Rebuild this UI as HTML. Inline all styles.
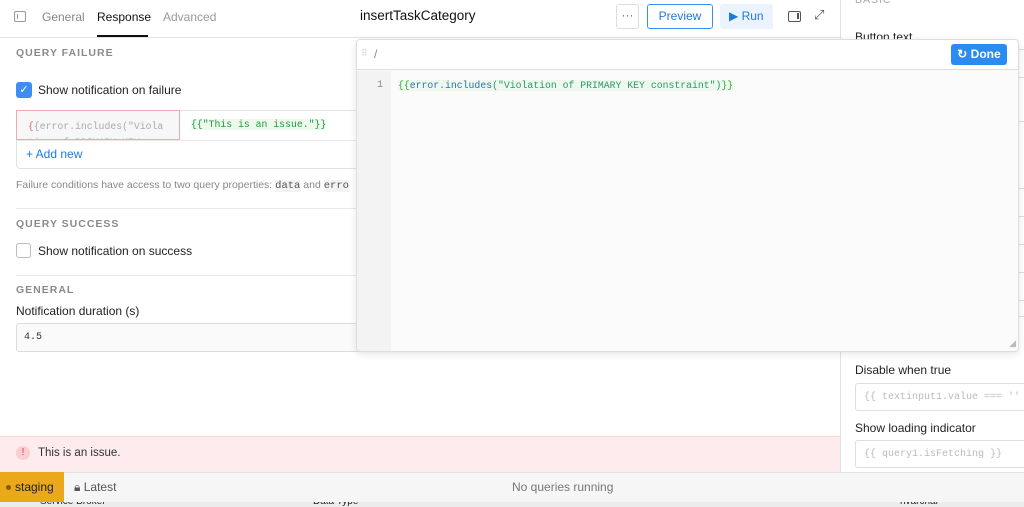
<!DOCTYPE html>
<html><head><style>
*{box-sizing:border-box;margin:0;padding:0}
body{width:1024px;height:507px;overflow:hidden;font-family:"Liberation Sans",sans-serif;background:#fff;position:relative;color:#1f1f1f}
.a{position:absolute}
.mono{font-family:"Liberation Mono",monospace}
.sec{font-size:10.5px;letter-spacing:1px;color:#8a8a8a;font-weight:bold}
.lbl{font-size:12px;color:#222}
</style></head><body>
<!-- top bar -->
<div class="a" style="left:0;top:0;width:841px;height:38px;border-bottom:1px solid #e2e2e2"></div>
<div class="a" style="left:14px;top:11px;width:12px;height:11px;border:1px solid #999;border-radius:2px"><div style="position:absolute;left:2px;top:2px;width:1px;height:5px;background:#999"></div></div>
<div class="a" style="left:42px;top:10px;font-size:12px;color:#888">General</div>
<div class="a" style="left:97px;top:10px;font-size:12px;color:#111">Response</div>
<div class="a" style="left:97px;top:35px;width:51px;height:2px;background:#111"></div>
<div class="a" style="left:163px;top:10px;font-size:12px;color:#999">Advanced</div>
<div class="a" style="left:360px;top:8px;font-size:13.5px;color:#111">insertTaskCategory</div>
<div class="a" style="left:616px;top:4px;width:23px;height:25px;border:1px solid #ddd;border-radius:3px;text-align:center;font-size:12px;line-height:20px;color:#666">···</div>
<div class="a" style="left:647px;top:4px;width:66px;height:25px;border:1px solid #3d8ef0;border-radius:3px;text-align:center;font-size:12px;line-height:23px;color:#1f7ae0">Preview</div>
<div class="a" style="left:720px;top:4px;width:53px;height:25px;background:#eaf3fe;border-radius:3px;font-size:12px;line-height:25px;color:#1f7ae0;padding-left:9px">▶ Run</div>
<div class="a" style="left:788px;top:11px;width:13px;height:11px;border:1.5px solid #555;border-radius:2px"><div style="position:absolute;right:1px;top:1px;width:2px;height:6px;background:#555"></div></div>
<div class="a" style="left:814px;top:7px;font-size:13px;color:#555">⤢</div>
<!-- right panel -->
<div class="a" style="left:840px;top:0;width:1px;height:472px;background:#e2e2e2"></div>
<div class="a sec" style="left:855px;top:-6px;font-weight:normal;color:#aaa">BASIC</div>
<div class="a lbl" style="left:855px;top:30px">Button text</div>
<div class="a" style="left:1018px;top:49px;width:6px;height:1px;background:#ddd"></div>
<div class="a" style="left:1018px;top:77px;width:6px;height:1px;background:#ddd"></div>
<div class="a" style="left:1018px;top:121px;width:6px;height:1px;background:#ddd"></div>
<div class="a" style="left:1018px;top:188px;width:6px;height:1px;background:#ddd"></div>
<div class="a" style="left:1018px;top:216px;width:6px;height:1px;background:#ddd"></div>
<div class="a" style="left:1018px;top:244px;width:6px;height:1px;background:#ddd"></div>
<div class="a" style="left:1018px;top:272px;width:6px;height:1px;background:#ddd"></div>
<div class="a" style="left:1018px;top:300px;width:6px;height:1px;background:#ddd"></div>
<div class="a" style="left:1018px;top:316px;width:6px;height:1px;background:#ddd"></div>
<div class="a lbl" style="left:855px;top:363px">Disable when true</div>
<div class="a mono" style="left:855px;top:383px;width:180px;height:28px;border:1px solid #ddd;border-radius:3px;font-size:10px;color:#bbb;padding:8px 8px">{{ textinput1.value === ''</div>
<div class="a lbl" style="left:855px;top:421px">Show loading indicator</div>
<div class="a mono" style="left:855px;top:440px;width:180px;height:28px;border:1px solid #ddd;border-radius:3px;font-size:10px;color:#bbb;padding:8px 8px">{{ query1.isFetching }}</div>
<!-- left content -->
<div class="a sec" style="left:16px;top:47px">QUERY FAILURE</div>
<div class="a" style="left:16px;top:82px;width:16px;height:16px;background:#3d8ef0;border-radius:3px;color:#fff;font-size:11px;text-align:center;line-height:16px">✓</div>
<div class="a lbl" style="left:38px;top:83px">Show notification on failure</div>
<div class="a" style="left:16px;top:110px;width:360px;height:59px;border:1px solid #e2e2e2;border-radius:4px"></div>
<div class="a" style="left:16px;top:110px;width:164px;height:30px;border:1px solid #f4a9ab;background:#f7f7f7;overflow:hidden"><div class="mono" style="font-size:9.8px;color:#aaa;padding:8px 11px;line-height:16px;word-break:break-all"><span style="color:#e26b6b">{</span>{error.includes("Violation of PRIMARY KEY</div></div>
<div class="a" style="left:16px;top:140px;width:340px;height:1px;background:#e8e8e8"></div>
<div class="a mono" style="left:191px;top:119px;font-size:9.8px;color:#1f9a3a;background:#eef9ee">{{"This is an issue."}}</div>
<div class="a" style="left:26px;top:147px;font-size:12px;color:#1f7ae0">+ Add new</div>
<div class="a" style="left:16px;top:179px;font-size:10.5px;color:#888">Failure conditions have access to two query properties: <span class="mono" style="background:#f3f3f3;color:#555">data</span> and <span class="mono" style="background:#f3f3f3;color:#555">erro</span></div>
<div class="a" style="left:16px;top:208px;width:340px;height:1px;background:#e8e8e8"></div>
<div class="a sec" style="left:16px;top:218px">QUERY SUCCESS</div>
<div class="a" style="left:16px;top:243px;width:15px;height:15px;border:1px solid #bbb;border-radius:3px"></div>
<div class="a lbl" style="left:38px;top:244px">Show notification on success</div>
<div class="a" style="left:16px;top:275px;width:340px;height:1px;background:#e8e8e8"></div>
<div class="a sec" style="left:16px;top:284px">GENERAL</div>
<div class="a lbl" style="left:16px;top:304px">Notification duration (s)</div>
<div class="a mono" style="left:16px;top:323px;width:360px;height:29px;border:1px solid #ddd;border-radius:3px;background:#fafafa;font-size:10px;padding:8px 7px;color:#333">4.5</div>
<!-- popup -->
<div class="a" style="left:356px;top:39px;width:663px;height:313px;border:1px solid #ddd;border-radius:4px;background:#fbfbfb;box-shadow:0 2px 8px rgba(0,0,0,.1);overflow:hidden">
 <div style="height:30px;background:#fff;border-bottom:1px solid #ddd;position:relative">
  <div class="a" style="left:4px;top:8px;font-size:9px;color:#ccc;letter-spacing:-1px">⠿</div>
  <div class="a" style="left:17px;top:7px;font-size:12px;color:#888">/</div>
  <div class="a" style="left:594px;top:4px;width:56px;height:21px;background:#2a8cf0;border-radius:3px;color:#fff;font-size:12px;font-weight:bold;line-height:21px;text-align:center">↻ Done</div>
 </div>
 <div class="a" style="left:0;top:31px;width:34px;height:282px;background:#f3f3f3"></div>
 <div class="a mono" style="left:20px;top:40px;font-size:10px;color:#888">1</div>
 <div class="a mono" style="left:41px;top:40px;font-size:9.8px;color:#2a9a6a;background:#eef8ee"><span style="color:#3aa83a">{{</span><span style="color:#2d6fb5">error.includes</span>("Violation of PRIMARY KEY constraint")<span style="color:#3aa83a">}}</span></div>
 <div class="a" style="right:2px;bottom:2px;font-size:9px;color:#bbb">◢</div>
</div>
<!-- notification -->
<div class="a" style="left:0;top:436px;width:840px;height:36px;background:#fdebed;border-top:1px solid #f6d4d8"></div>
<div class="a" style="left:16px;top:446px;width:14px;height:14px;border-radius:50%;background:#f8d0d4;color:#e0353f;font-size:10px;text-align:center;line-height:14px">!</div>
<div class="a" style="left:38px;top:447px;font-size:11.5px;color:#333">This is an issue.</div>
<!-- status bar -->
<div class="a" style="left:0;top:472px;width:1024px;height:30px;background:#f6f6f6;border-top:1px solid #e2e2e2"></div>
<div class="a" style="left:0;top:472px;width:64px;height:30px;background:#e9a91a;font-size:12px;line-height:30px;padding-left:6px;color:#222"><span style="display:inline-block;width:5px;height:5px;border-radius:50%;background:#8a5a00;vertical-align:middle;margin-right:4px"></span>staging</div>
<div class="a" style="left:74px;top:480px;font-size:12px;color:#555">🔒︎ Latest</div>
<div class="a" style="left:512px;top:480px;font-size:12px;color:#777">No queries running</div>
<div class="a" style="left:0;top:502px;width:1024px;height:5px;background:#ececec;overflow:hidden"><span style="position:absolute;left:40px;top:-6px;font-size:10px">Service Broker</span><span style="position:absolute;left:313px;top:-6px;font-size:10px">Data Type</span><span style="position:absolute;left:900px;top:-6px;font-size:10px">nvarchar</span></div>
</body></html>
